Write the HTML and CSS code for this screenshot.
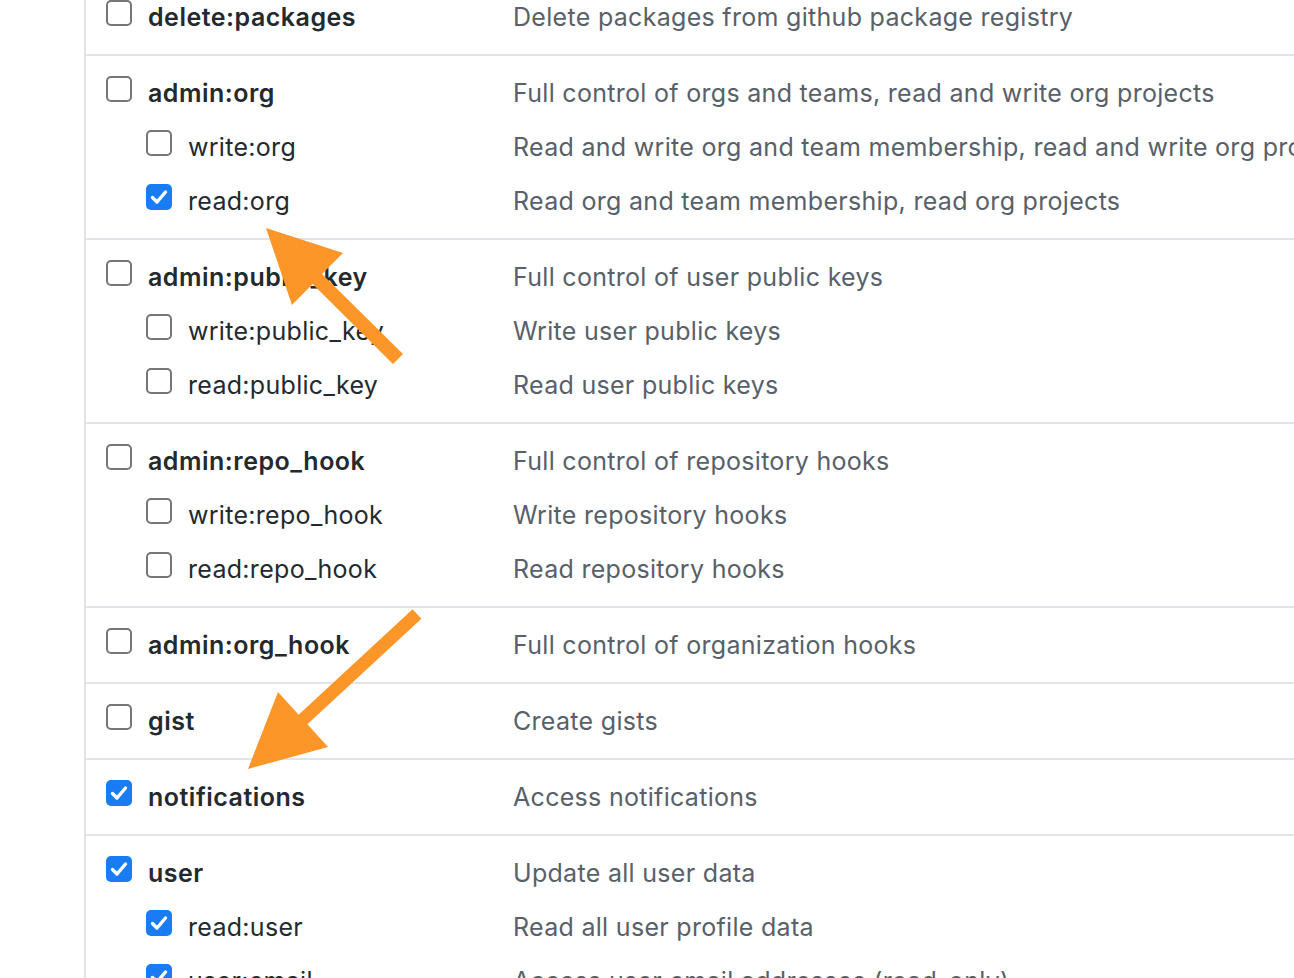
FILE: index.html
```html
<!DOCTYPE html>
<html lang="en">
<head>
    <meta charset="UTF-8">
    <title>Select scopes</title>
    <link rel="stylesheet" href="styles.css">
</head>
<body>
    <div class="scopes">
        <div class="group">
            <div class="row">
                <span class="box"></span>
                <span class="name top">delete:packages</span>
                <span class="desc">Delete packages from github package registry</span>
            </div>
        </div>

        <div class="group">
            <div class="row">
                <span class="box"></span>
                <span class="name top">admin:org</span>
                <span class="desc">Full control of orgs and teams, read and write org projects</span>
            </div>
            <div class="row sub">
                <span class="box"></span>
                <span class="name">write:org</span>
                <span class="desc">Read and write org and team membership, read and write org projects</span>
            </div>
            <div class="row sub">
                <span class="box checked"><svg viewBox="0 0 26 26"><path d="M6.5 13.5l4.5 4.5 8.5-10"/></svg></span>
                <span class="name">read:org</span>
                <span class="desc">Read org and team membership, read org projects</span>
            </div>
        </div>

        <div class="group">
            <div class="row">
                <span class="box"></span>
                <span class="name top">admin:public_key</span>
                <span class="desc">Full control of user public keys</span>
            </div>
            <div class="row sub">
                <span class="box"></span>
                <span class="name">write:public_key</span>
                <span class="desc">Write user public keys</span>
            </div>
            <div class="row sub">
                <span class="box"></span>
                <span class="name">read:public_key</span>
                <span class="desc">Read user public keys</span>
            </div>
        </div>

        <div class="group">
            <div class="row">
                <span class="box"></span>
                <span class="name top">admin:repo_hook</span>
                <span class="desc">Full control of repository hooks</span>
            </div>
            <div class="row sub">
                <span class="box"></span>
                <span class="name">write:repo_hook</span>
                <span class="desc">Write repository hooks</span>
            </div>
            <div class="row sub">
                <span class="box"></span>
                <span class="name">read:repo_hook</span>
                <span class="desc">Read repository hooks</span>
            </div>
        </div>

        <div class="group">
            <div class="row">
                <span class="box"></span>
                <span class="name top">admin:org_hook</span>
                <span class="desc">Full control of organization hooks</span>
            </div>
        </div>

        <div class="group">
            <div class="row">
                <span class="box"></span>
                <span class="name top">gist</span>
                <span class="desc">Create gists</span>
            </div>
        </div>

        <div class="group">
            <div class="row">
                <span class="box checked"><svg viewBox="0 0 26 26"><path d="M6.5 13.5l4.5 4.5 8.5-10"/></svg></span>
                <span class="name top">notifications</span>
                <span class="desc">Access notifications</span>
            </div>
        </div>

        <div class="group">
            <div class="row">
                <span class="box checked"><svg viewBox="0 0 26 26"><path d="M6.5 13.5l4.5 4.5 8.5-10"/></svg></span>
                <span class="name top">user</span>
                <span class="desc">Update all user data</span>
            </div>
            <div class="row sub">
                <span class="box checked"><svg viewBox="0 0 26 26"><path d="M6.5 13.5l4.5 4.5 8.5-10"/></svg></span>
                <span class="name">read:user</span>
                <span class="desc">Read all user profile data</span>
            </div>
            <div class="row sub">
                <span class="box checked"><svg viewBox="0 0 26 26"><path d="M6.5 13.5l4.5 4.5 8.5-10"/></svg></span>
                <span class="name">user:email</span>
                <span class="desc">Access user email addresses (read-only)</span>
            </div>
        </div>
    </div>

    <!-- annotation arrows drawn over the list -->
    <svg class="arrows" width="1294" height="978" viewBox="0 0 1294 978">
        <polygon points="266,228 343,253 322,274 403,354 393,364 312.6,284 292,305"/>
        <polygon points="248,769 278,692 298.6,714.7 412.6,609.2 421.4,618.8 307.4,724.3 328,747"/>
    </svg>
</body>
</html>
```

FILE: styles.css
```css
body {
    margin: 0;
    background: #fff;
    font-family: Inter, "Noto Sans", sans-serif;
    font-size: 25px;
    letter-spacing: 0.3px;
    color: #24292e;
    overflow: hidden;
    height: 978px;
}
.scopes {
    margin-left: 84px;
    margin-top: -20px;
    width: 1400px;
    border-left: 2px solid #e1e4e8;
}
.group {
    border-top: 2px solid #e1e4e8;
    padding: 10px 0 10px 20px;
}
.group:first-child {
    border-top: none;
}
.row {
    display: grid;
    grid-template-columns: 26px 349px 1fr;
    column-gap: 16px;
    height: 54px;
    line-height: 54px;
    white-space: nowrap;
}
.row.sub {
    grid-template-columns: 26px 309px 1fr;
    padding-left: 40px;
}
.box {
    box-sizing: border-box;
    width: 26px;
    height: 26px;
    margin-top: 10px;
    border: 2px solid #767676;
    border-radius: 5px;
    background: #fff;
}
.box.checked {
    border: none;
    background: #1a7cf5;
}
.box svg {
    display: block;
    width: 26px;
    height: 26px;
}
.box path {
    fill: none;
    stroke: #fff;
    stroke-width: 3.4;
    stroke-linecap: round;
    stroke-linejoin: round;
}
.name.top {
    font-weight: 600;
    letter-spacing: 0.5px;
}
.desc {
    color: #586069;
}
.arrows {
    position: absolute;
    top: 0;
    left: 0;
}
.arrows polygon {
    fill: #fc9629;
}
```
